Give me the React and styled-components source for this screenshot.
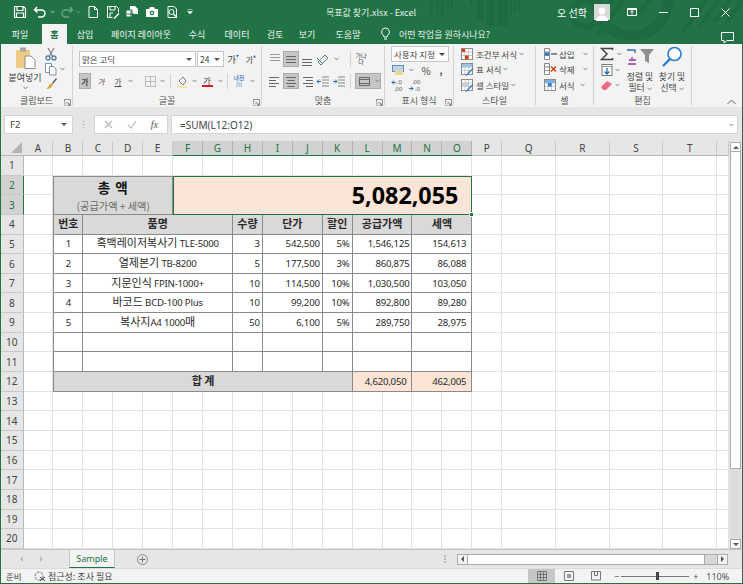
import React from "react";
import styled, { createGlobalStyle } from "styled-components";

const UI = `"Noto Sans", "Noto Sans CJK KR", sans-serif`;
const KR = `"Noto Sans CJK KR", "Noto Sans", sans-serif`;
const GREEN = "#217346";

const COLS = ["A","B","C","D","E","F","G","H","I","J","K","L","M","N","O","P","Q","R","S","T",""];
const COL_SIZES = "repeat(16, 29.93px) repeat(4, 53.7px) 11.5px";

// cells of the table: [row, col, colSpan, text, kind]
const TABLE = [
  [4,2,1,"번호","head"],[4,3,5,"품명","head"],[4,8,1,"수량","head"],[4,9,2,"단가","head"],
  [4,11,1,"할인","head"],[4,12,2,"공급가액","head"],[4,14,2,"세액","head"],
  [12,2,10,"합 계","total"],[12,12,2,"4,620,050","sum"],[12,14,2,"462,005","sum"],
];
const ROWS = [
  ["1","흑백레이저복사기 TLE-5000","3","542,500","5%","1,546,125","154,613"],
  ["2","열제본기 TB-8200","5","177,500","3%","860,875","86,088"],
  ["3","지문인식 FPIN-1000+","10","114,500","10%","1,030,500","103,050"],
  ["4","바코드 BCD-100 Plus","10","99,200","10%","892,800","89,280"],
  ["5","복사지A4 1000매","50","6,100","5%","289,750","28,975"],
  ["","","","","","",""],
  ["","","","","","",""],
];
ROWS.forEach((r, i) => {
  const y = 5 + i;
  TABLE.push(
    [y,2,1,r[0],"center"],[y,3,5,r[1],"center"],[y,8,1,r[2],"num"],[y,9,2,r[3],"num"],
    [y,11,1,r[4],"num"],[y,12,2,r[5],"num"],[y,14,2,r[6],"tax"]
  );
});

const GlobalStyle = createGlobalStyle`
  html, body { margin: 0; padding: 0; background: #e6e6e6; overflow: hidden; }
  * { box-sizing: border-box; }
`;

const Win = styled.div`
  width: 743px;
  height: 584px;
  display: flex;
  flex-direction: column;
  border-left: 1px solid ${GREEN};
  border-right: 1px solid ${GREEN};
  border-bottom: 1px solid ${GREEN};
  font-family: ${UI};
  color: #444;
  overflow: hidden;
`;

const Header = styled.div`
  position: relative;
  background: ${GREEN};
  height: 44px;
  flex: none;
  color: #fff;
  overflow: hidden;
`;
const Pattern = styled.svg`
  position: absolute;
  left: 419px;
  top: 0;
`;
const TitleBar = styled.div`
  position: relative;
  height: 24px;
  display: flex;
  align-items: center;
`;
const Qat = styled.div`
  display: flex;
  align-items: center;
  width: 197px;
  padding-left: 9px;
  flex: none;
`;
const QatBtn = styled.span`
  display: flex;
  justify-content: center;
  width: ${p => p.$w || 20}px;
  margin-left: ${p => p.$ml || 0}px;
  flex: none;
  opacity: ${p => (p.$dim ? 0.35 : 1)};
`;
const Title = styled.div`
  width: 346px;
  flex: none;
  text-align: center;
  font: 9px ${KR};
  color: #e6f0ea;
`;
const UserName = styled.div`
  font: 10px ${KR};
  width: 44px;
  flex: none;
  margin-left: 6px;
  text-align: center;
`;
const Avatar = styled.div`
  width: 16px;
  height: 16px;
  background: #d9d9d9;
  flex: none;
  margin-right: 7px;
`;
const WinBtn = styled.span`
  display: flex;
  justify-content: center;
  width: 31px;
  flex: none;
`;
const TabRow = styled.div`
  position: relative;
  height: 20px;
  display: flex;
  align-items: stretch;
`;
const Tab = styled.div`
  width: ${p => p.$w}px;
  margin-left: ${p => p.$ml || 0}px;
  flex: none;
  display: flex;
  align-items: center;
  justify-content: center;
  font: ${p => (p.$active ? 700 : 400)} 9px ${KR};
  color: ${p => (p.$active ? GREEN : "#f0f5f2")};
  background: ${p => (p.$active ? "#f3f3f3" : "transparent")};
`;
const TellMe = styled.div`
  display: flex;
  align-items: center;
  gap: 8px;
  margin-left: 7px;
  font: 9px ${KR};
  color: #e6f0ea;
`;
const CommentBtn = styled.span`
  position: absolute;
  left: 720px;
  top: 3px;
`;

const Ribbon = styled.div`
  position: relative;
  height: 63px;
  flex: none;
  background: #f3f3f3;
  display: flex;
  padding-top: 2px;
`;
const Group = styled.div`
  position: relative;
  width: ${p => p.$w}px;
  flex: none;
  height: 59px;
  border-right: 1px solid #d2d2d2;
`;
const GroupBody = styled.div`
  height: 49px;
  display: flex;
  padding-left: ${p => p.$pad || 0}px;
`;
const GroupLabel = styled.div`
  height: 12px;
  font: 9px/12px ${KR};
  text-align: center;
  color: #555;
`;
const Launcher = styled.svg`
  position: absolute;
  right: 1px;
  bottom: -1px;
`;
const Stack = styled.div`
  display: flex;
  flex-direction: column;
  flex: none;
  gap: ${p => p.$gap || 0}px;
  padding-top: ${p => p.$top || 0}px;
  align-items: ${p => (p.$center ? "center" : "flex-start")};
  width: ${p => (p.$w ? p.$w + "px" : "auto")};
`;
const Line = styled.div`
  display: flex;
  align-items: center;
  height: ${p => p.$h || 15}px;
  gap: ${p => p.$gap || 0}px;
  padding-left: ${p => p.$pad || 0}px;
`;
const PasteText = styled.div`
  font: 9px/11px ${KR};
  color: #444;
  margin-top: 3px;
  white-space: nowrap;
`;
const Combo = styled.div`
  width: ${p => p.$w}px;
  height: 16px;
  margin-left: ${p => p.$ml || 0}px;
  flex: none;
  background: #fff;
  border: 1px solid #c6c6c6;
  display: flex;
  align-items: center;
  justify-content: space-between;
  padding: 0 3px 0 2px;
  font: 8.5px ${KR};
  color: #444;
`;
const Tool = styled.span`
  width: ${p => p.$w || 16}px;
  height: 16px;
  margin-left: ${p => p.$ml || 0}px;
  flex: none;
  display: flex;
  align-items: center;
  justify-content: center;
  font: ${p => (p.$bold ? 700 : 400)} ${p => p.$size || 8.5}px ${KR};
  font-style: ${p => (p.$italic ? "italic" : "normal")};
  text-decoration: ${p => (p.$under ? "underline" : "none")};
  color: #444;
  background: ${p => (p.$on ? "#c6c6c6" : "transparent")};
  border: ${p => (p.$on ? "1px solid #ababab" : "0")};
`;
const MergeTool = styled(Tool)`
  justify-content: flex-start;
  gap: 5px;
  padding-left: 3px;
`;
const SmallStack = styled(Tool)`
  line-height: 6px;
  text-align: center;
  font-size: 6px;
  color: ${p => p.$color || "#444"};
`;
const ColorTool = styled(Tool)`
  flex-direction: column;
  line-height: 10px;
`;
const ColorBar = styled.span`
  width: 11px;
  height: 2px;
  background: #e81123;
`;
const Sep = styled.span`
  width: 1px;
  height: 15px;
  flex: none;
  background: #d2d2d2;
  margin: 0 ${p => p.$mr ?? 3}px 0 ${p => p.$ml ?? 3}px;
`;
const MenuItem = styled.div`
  display: flex;
  align-items: center;
  height: 15.5px;
  gap: 2px;
  font: 8.5px ${KR};
  color: #444;
  white-space: nowrap;
`;
const ChevGap = styled.span`
  display: flex;
  margin-left: ${p => p.$ml}px;
`;
const BigTool = styled.div`
  width: 32px;
  flex: none;
  display: flex;
  flex-direction: column;
  align-items: center;
  font: 8.8px/11px ${KR};
  color: #444;
  text-align: center;
  white-space: nowrap;
`;
const BigCaption = styled.span`
  margin-top: ${p => p.$top || 0}px;
`;
const Collapse = styled.svg`
  position: absolute;
  left: 726px;
  top: 55px;
`;

const FormulaBar = styled.div`
  height: 34px;
  flex: none;
  background: #e6e6e6;
  display: flex;
  padding: 8px 4px 0 3px;
`;
const NameBox = styled.div`
  width: 69px;
  height: 19px;
  background: #fff;
  border: 1px solid #d4d4d4;
  display: flex;
  align-items: center;
  justify-content: space-between;
  padding: 0 5px;
  font-size: 9.5px;
  color: #444;
`;
const Grip = styled.div`
  width: 21px;
  height: 19px;
  display: flex;
  align-items: center;
  justify-content: center;
  color: #999;
  font-size: 9px;
`;
const FxButtons = styled.div`
  width: 74px;
  height: 19px;
  background: #fff;
  border: 1px solid #d4d4d4;
  display: flex;
  align-items: center;
  justify-content: space-around;
  padding: 0 2px;
`;
const FxLabel = styled.span`
  font: italic 10px "Liberation Serif", serif;
  color: #555;
`;
const FormulaInput = styled.div`
  width: 567px;
  height: 19px;
  margin-left: 3px;
  background: #fff;
  border: 1px solid #d4d4d4;
  display: flex;
  align-items: center;
  justify-content: space-between;
  padding: 0 3px 0 8px;
  font-size: 10px;
  color: #444;
`;

const SheetArea = styled.div`
  flex: 1;
  display: flex;
  min-height: 0;
  background: #e6e6e6;
`;
const Grid = styled.div`
  display: grid;
  grid-template-columns: 22.5px ${COL_SIZES};
  grid-template-rows: 15px repeat(20, 19.65px);
  background: #fff;
  width: 728px;
  flex: none;
`;
const Corner = styled.div`
  background: #e6e6e6;
  border-bottom: 1px solid #b9b9b9;
  position: relative;
`;
const CornerMark = styled.svg`
  position: absolute;
  right: 2px;
  bottom: 2px;
`;
const ColHead = styled.div`
  display: flex;
  align-items: center;
  justify-content: center;
  font-size: 10px;
  color: ${p => (p.$on ? GREEN : "#444")};
  background: ${p => (p.$on ? "#d2d2d2" : "#e6e6e6")};
  border-right: 1px solid ${p => (p.$on ? "#b2b2b2" : "#c8c8c8")};
  border-bottom: ${p => (p.$on ? `1px solid ${GREEN}` : "1px solid #b9b9b9")};
`;
const RowHead = styled.div`
  display: flex;
  align-items: center;
  justify-content: center;
  font-size: 10px;
  color: ${p => (p.$on ? GREEN : "#444")};
  background: ${p => (p.$on ? "#d2d2d2" : "#e6e6e6")};
  border-bottom: 1px solid #c8c8c8;
  border-right: ${p => (p.$on ? `1px solid ${GREEN}` : "1px solid #b9b9b9")};
`;
const Blank = styled.div`
  border-right: 1px solid #e1e1e1;
  border-bottom: 1px solid #e1e1e1;
`;
const CELL_BG = { head: "#d9d9d9", total: "#d9d9d9", sum: "#fce4d6", center: "#fff", num: "#fff", tax: "#fff" };
const Cell = styled.div`
  grid-column: ${p => p.$col + 1} / span ${p => p.$span};
  grid-row: ${p => p.$row + 1};
  display: flex;
  align-items: center;
  justify-content: ${p => (["num", "tax", "sum"].includes(p.$kind) ? "flex-end" : "center")};
  padding: 0 ${p => (p.$kind === "tax" || p.$kind === "sum" ? 5 : 2)}px 0 2px;
  background: ${p => CELL_BG[p.$kind]};
  border-right: 1px solid #8a8a8a;
  border-bottom: 1px solid #8a8a8a;
  border-left: ${p => (p.$col === 2 ? "1px solid #8a8a8a" : 0)};
  box-shadow: ${p => (p.$row === 12 ? "0 -1px 0 #9a9a9a" : "none")};
  font: ${p => (p.$kind === "head" || p.$kind === "total" ? 700 : 400)} 9.6px ${UI};
  letter-spacing: -0.2px;
  color: #2a2a2a;
  white-space: nowrap;
`;
const Han = styled.span`
  font-family: ${KR};
  font-size: 11px;
  letter-spacing: 0;
  line-height: 1;
`;
const TitleCell = styled.div`
  grid-column: 3 / span 4;
  grid-row: 3 / span 2;
  background: #d9d9d9;
  border: 1px solid #8a8a8a;
  display: flex;
  flex-direction: column;
  align-items: center;
`;
const TitleMain = styled.div`
  font: 700 13.5px/20px ${KR};
  color: #111;
  letter-spacing: 1px;
`;
const TitleSub = styled.div`
  font: 10.2px/18px ${KR};
  color: #6a6a6a;
`;
const TotalCell = styled.div`
  grid-column: 7 / span 10;
  grid-row: 3 / span 2;
  background: #fce4d6;
  display: flex;
  align-items: center;
  justify-content: flex-end;
  padding-right: 13px;
  font: 700 23.3px ${UI};
  color: #000;
  border: 1px solid ${GREEN};
  position: relative;
  z-index: 1;
`;
const Handle = styled.span`
  position: absolute;
  right: -3px;
  bottom: -3px;
  width: 5px;
  height: 5px;
  background: ${GREEN};
  border: 1px solid #fff;
`;

const VScroll = styled.div`
  width: 11px;
  margin: 1px 0 0 1px;
  display: flex;
  flex-direction: column;
`;
const ScrollBtn = styled.div`
  height: ${p => p.$h || 10}px;
  flex: none;
  background: #fff;
  border: 1px solid #ababab;
  display: flex;
  align-items: center;
  justify-content: center;
`;
const VThumb = styled.div`
  flex: 1;
  background: #fff;
  border-left: 1px solid #ababab;
  border-right: 1px solid #ababab;
  border-bottom: 1px solid #ababab;
`;
const VTrack = styled.div`
  height: 70px;
  background: #dcdcdc;
`;

const SheetTabs = styled.div`
  height: 19px;
  flex: none;
  background: #e6e6e6;
  border-top: 1px solid #c6c6c6;
  display: flex;
  align-items: center;
`;
const TabNav = styled.div`
  width: 68px;
  flex: none;
  display: flex;
  gap: 17px;
  padding-left: 19px;
`;
const SheetTab = styled.div`
  width: 46px;
  height: 18px;
  flex: none;
  background: #f3f3f3;
  border-left: 1px solid #c6c6c6;
  border-right: 1px solid #c6c6c6;
  border-bottom: 1px solid ${GREEN};
  margin-top: -1px;
  color: ${GREEN};
  font-size: 9px;
  display: flex;
  align-items: center;
  justify-content: center;
`;
const AddSheet = styled.svg`
  margin-left: 22px;
  flex: none;
`;
const Dots = styled.div`
  margin-left: 296px;
  width: 2px;
  height: 8px;
  border-left: 2px dotted #bbb;
  flex: none;
`;
const HScroll = styled.div`
  margin-left: 11px;
  width: 271px;
  height: 11px;
  display: flex;
  flex: none;
  background: #d8d8d8;
  border: 1px solid #ababab;
  align-items: stretch;
`;
const HBtn = styled.div`
  width: 10px;
  flex: none;
  background: #f3f3f3;
  display: flex;
  align-items: center;
  justify-content: center;
  border-right: ${p => (p.$end ? 0 : "1px solid #ababab")};
  border-left: ${p => (p.$end ? "1px solid #ababab" : 0)};
`;
const HThumb = styled.div`
  width: 237px;
  flex: none;
  background: #fff;
  border-right: 1px solid #ababab;
`;
const HTrack = styled.div`
  flex: 1;
`;

const Status = styled.div`
  height: 15px;
  flex: none;
  background: #f3f3f3;
  border-top: 1px solid #dcdcdc;
  display: flex;
  align-items: center;
  font: 8.5px ${KR};
  color: #444;
`;
const StatusLeft = styled.div`
  width: 33px;
  padding-left: 5px;
  flex: none;
`;
const A11y = styled.div`
  display: flex;
  align-items: center;
  gap: 2px;
  width: 494px;
  flex: none;
  font-size: 9px;
`;
const ViewBtn = styled.div`
  width: 27px;
  height: 14px;
  flex: none;
  display: flex;
  align-items: center;
  justify-content: center;
  background: ${p => (p.$on ? "#c6c6c6" : "transparent")};
`;
const ZoomSlider = styled.div`
  margin: 0 4px 0 2px;
  width: 68px;
  flex: none;
  height: 1px;
  background: #777;
  position: relative;
`;
const ZoomKnob = styled.span`
  position: absolute;
  left: 35px;
  top: -4px;
  width: 3px;
  height: 8px;
  background: #444;
`;
const ZoomText = styled.span`
  font: 9px ${UI};
  color: #555;
  margin-left: ${p => p.$ml || 0}px;
  white-space: nowrap;
`;

const Chev = ({ c = "#666", s = 5 }) => (
  <svg width={s} height={s - 1} viewBox="0 0 6 4" style={{ flex: "none" }}>
    <path d="M.6.6 3 3 5.4.6" fill="none" stroke={c} strokeWidth="1" />
  </svg>
);
const Tri = ({ d = "down", c = "#555" }) => {
  const p = { down: "M0 0h6L3 3z", up: "M0 3h6L3 0z", left: "M3 0v6L0 3z", right: "M0 0v6l3-3z" }[d];
  const vertical = d === "down" || d === "up";
  return (
    <svg width={vertical ? 6 : 3} height={vertical ? 3 : 6} viewBox={vertical ? "0 0 6 3" : "0 0 3 6"}>
      <path d={p} fill={c} />
    </svg>
  );
};
const LaunchIcon = () => (
  <Launcher width="7" height="7" viewBox="0 0 7 7">
    <path d="M.5 3V.5h6v6H4M3 3l3 3M4 6h2V4" fill="none" stroke="#777" strokeWidth=".8" />
    <rect x=".5" y="4" width="2.5" height="2.500" fill="none" stroke="#999" strokeWidth=".6" />
  </Launcher>
);
const AlignLines = ({ y = [3, 6, 9, 12], w = [12, 12, 12, 12], x = "center", c = "#666" }) => (
  <svg width="14" height="14" viewBox="0 0 14 14">
    {y.map((v, i) => {
      const x0 = x === "left" ? 1 : x === "right" ? 13 - w[i] : 7 - w[i] / 2;
      return <rect key={v} x={x0} y={v} width={w[i]} height="1" fill={c} />;
    })}
  </svg>
);
const Ic = ({ w = 14, h = 14, vb, children }) => (
  <svg width={w} height={h} viewBox={vb || `0 0 ${w} ${h}`} style={{ flex: "none" }}>{children}</svg>
);
const GridIcon = ({ children }) => (
  <Ic>
    <rect x="1.500" y="1.500" width="11" height="11" fill="#fff" stroke="#8a8a8a" />
    <path d="M1.500 5h11M1.500 8.500h11M5 1.500v11M8.500 1.500v11" stroke="#b5b5b5" strokeWidth=".7" />
    {children}
  </Ic>
);
const PenOver = () => <path d="M6 12.500 12.500 6l1 1-6.500 6.500H5z" fill="#2b7cd3" />;

// 한글만 조금 크게: the sheet's hangul runs wider than its digits
const Mixed = ({ text }) => (
  <span>
    {text.split(/([가-힣]+)/).map((part, i) =>
      /[가-힣]/.test(part) ? <Han key={i}>{part}</Han> : part
    )}
  </span>
);

const App = () => {
  const taken = {};
  TABLE.forEach(([r, c, span]) => {
    for (let i = 0; i < span; i++) taken[`${r}-${c + i}`] = true;
  });
  for (let r = 2; r <= 3; r++) for (let c = 2; c <= 15; c++) taken[`${r}-${c}`] = true;

  const rows = Array.from({ length: 20 }, (_, i) => i + 1);

  return (
    <>
      <GlobalStyle />
      <Win>
        <Header>
          <Pattern width="323" height="44" viewBox="0 0 323 44">
            <g fill="#1e6b41">
              <path d="M10 0h3v14h-3zM16 0h2v10h-2zM21 0h3v16h-3zM27 0h2v12h-2zM31 0h2v8h-2zM50 0h2v4h-2zM57 0h7v20h-7zM67 0h8v26h-8zM78 0h10v26h-10zM90 0h2v16h-2zM94 0h2v13h-2zM98 0h2v10h-2z" />
              <path d="M189 0h6l-18 24h-6zM200 0h6l-26 36h-6zM226 0h6l-10 14h-6zM284 0h5l-24 32h-5zM296 0h5l-20 28h-5zM308 0h5l-16 22h-5zM320 0h3v4l-14 18h-5z" />
            </g>
            <circle cx="165" cy="14" r="13" fill="none" stroke="#1e6b41" strokeWidth="6" />
            <path d="M176 0a36 36 0 0 0 72 0" fill="none" stroke="#1e6b41" strokeWidth="10" />
          </Pattern>
          <TitleBar>
            <Qat>
              <QatBtn>
                <Ic vb="0 0 14 14">
                  <path d="M1.500 1.500h9l2 2v9h-11zM4 1.500v4h6v-4M3.500 12.500v-4.500h7v4.500" fill="none" stroke="#fff" strokeWidth="1.200" />
                </Ic>
              </QatBtn>
              <QatBtn $w={16} $ml={2}>
                <Ic vb="0 0 14 14"><path d="M4 2 1.500 5 4.500 7.500M2 5h6.500a3.500 3.500 0 0 1 0 7H5" fill="none" stroke="#fff" strokeWidth="1.400" /></Ic>
              </QatBtn>
              <QatBtn $w={8}><Chev c="#cfe0d6" /></QatBtn>
              <QatBtn $w={18} $ml={2} $dim>
                <Ic vb="0 0 14 14"><path d="M10 2l2.500 3-3 2.500M12 5H5.500a3.500 3.500 0 0 0 0 7H9" fill="none" stroke="#fff" strokeWidth="1.400" /></Ic>
              </QatBtn>
              <QatBtn $w={5} $dim><Chev c="#fff" /></QatBtn>
              <QatBtn $w={24}>
                <Ic vb="0 0 14 14"><path d="M3 1.500h5.500l3 3v8h-8.500zM8.500 1.500v3h3" fill="none" stroke="#fff" /></Ic>
              </QatBtn>
              <QatBtn $w={16}>
                <Ic vb="0 0 14 14"><path d="M1.500 1.500h9l2 2v4M1.500 1.500v11h5M4 1.500v3.500h5v-3.500M4 12V8h3" fill="none" stroke="#fff" /><path d="M7.500 13l5-5 1 1-5 5z" fill="#fff" /></Ic>
              </QatBtn>
              <QatBtn $w={22}>
                <Ic vb="0 0 14 14"><path d="M5 1h5l3 3v5H5z" fill="#fff" /><path d="M1 5h6v7H1z" fill="#fff" stroke={GREEN} /><path d="M2 9h7M6 6v6" stroke={GREEN} /></Ic>
              </QatBtn>
              <QatBtn $w={18}>
                <Ic vb="0 0 14 14"><path d="M1 4h3l1-2h4l1 2h3v8H1z" fill="#fff" /><circle cx="7" cy="8" r="2.300" fill={GREEN} /><circle cx="7" cy="8" r="1.100" fill="#fff" /></Ic>
              </QatBtn>
              <QatBtn $w={22}>
                <Ic vb="0 0 14 14"><path d="M3 1.500h6l2.500 2.500v8.500H3z" fill="none" stroke="#fff" /><circle cx="6.500" cy="7" r="2.500" fill="none" stroke="#fff" /><path d="M8.500 9l3.500 3.500" stroke="#fff" strokeWidth="1.300" /></Ic>
              </QatBtn>
              <QatBtn $w={14}>
                <Ic w={6} h={6}><path d="M.5.5h5M.5 2.500h5l-2.500 2.500z" fill="#fff" stroke="#fff" strokeWidth=".5" /></Ic>
              </QatBtn>
            </Qat>
            <Title>목표값 찾기.xlsx - Excel</Title>
            <UserName>오 선학</UserName>
            <Avatar>
              <Ic w={16} h={16}><circle cx="8" cy="6" r="3.400" fill="#fff" /><path d="M2 16c0-4 3-5.500 6-5.500s6 1.500 6 5.500z" fill="#fff" /></Ic>
            </Avatar>
            <WinBtn>
              <Ic w={11} h={10}><path d="M.5 1.500h9v7h-9z" fill="none" stroke="#fff" /><path d="M.5 2.500h9" stroke="#fff" /><path d="M5 7.500V4M3.500 5 5 3.500 6.500 5" fill="none" stroke="#fff" /></Ic>
            </WinBtn>
            <WinBtn><Ic w={9} h={9}><path d="M0 4.500h9" stroke="#fff" /></Ic></WinBtn>
            <WinBtn><Ic w={9} h={9}><rect x=".5" y=".5" width="8" height="8" fill="none" stroke="#fff" /></Ic></WinBtn>
            <WinBtn><Ic w={9} h={9}><path d="M.5.5l8 8M8.500.5l-8 8" stroke="#fff" /></Ic></WinBtn>
          </TitleBar>
          <TabRow>
            <Tab $w={38}>파일</Tab>
            <Tab $w={25} $ml={3} $active>홈</Tab>
            <Tab $w={36}>삽입</Tab>
            <Tab $w={76}>페이지 레이아웃</Tab>
            <Tab $w={36}>수식</Tab>
            <Tab $w={44}>데이터</Tab>
            <Tab $w={32}>검토</Tab>
            <Tab $w={32}>보기</Tab>
            <Tab $w={50}>도움말</Tab>
            <TellMe>
              <Ic w={11} h={14}><path d="M5.500 1a4 4 0 0 0-2.300 7.200c.5.4.8 1 .8 1.800h3c0-.8.3-1.400.8-1.800A4 4 0 0 0 5.500 1zM4 12h3" fill="none" stroke="#fff" /></Ic>
              어떤 작업을 원하시나요?
            </TellMe>
            <CommentBtn>
              <Ic w={13} h={12}><path d="M.5.500h12v8H6l-3 2.500V8.500H.5z" fill="none" stroke="#fff" /></Ic>
            </CommentBtn>
          </TabRow>
        </Header>

        <Ribbon>
          <Group $w={72}>
            <GroupBody $pad={5}>
              <Stack $center $w={38}>
                <Ic w={22} h={23} vb="0 0 22 23">
                  <rect x="2" y="4" width="14" height="18" rx="1" fill="#eecb84" />
                  <rect x="6" y="1.500" width="6" height="4" fill="#a7a7a7" />
                  <path d="M11 10h6l4 4v8.500H11z" fill="#fff" stroke="#8d8d8d" />
                </Ic>
                <PasteText>붙여넣기</PasteText>
                <Line $h={9}><Chev /></Line>
              </Stack>
              <Stack>
                <Line>
                  <Ic><circle cx="4" cy="11" r="2" fill="none" stroke="#4f7cab" strokeWidth="1.300" /><circle cx="10" cy="11" r="2" fill="none" stroke="#4f7cab" strokeWidth="1.300" /><path d="M5.200 9.500 10 1M8.800 9.500 4 1" stroke="#777" strokeWidth="1.100" /></Ic>
                </Line>
                <Line $gap={2}>
                  <Ic><path d="M1.500 1.500h6v9h-6z" fill="#fff" stroke="#7a94b3" /><path d="M5.500 4.500h4l2.500 2.500v6h-6.500z" fill="#fff" stroke="#7a94b3" /></Ic>
                  <Chev />
                </Line>
                <Line>
                  <Ic><path d="M8 6l4-5 1 1-4 5z" fill="#555" /><path d="M2 12c2-1 3-4 5-6l2 2c-1 2-3 4-7 4z" fill="#d9a441" /></Ic>
                </Line>
              </Stack>
            </GroupBody>
            <GroupLabel>클립보드</GroupLabel>
            <LaunchIcon />
          </Group>

          <Group $w={189}>
            <GroupBody $pad={6}>
              <Stack $top={5} $gap={6}>
                <Line $h={16}>
                  <Combo $w={117}>맑은 고딕<Tri /></Combo>
                  <Combo $w={27} $ml={1}>24<Tri /></Combo>
                  <Tool $w={18} $size={9.5}>가<Ic w={3} h={8}><path d="M0 0h3L1.500 2.500z" fill="#2b6cb0" /></Ic></Tool>
                  <Tool $w={18} $size={8}>가<Ic w={3} h={8}><path d="M0 2.500h3L1.500 0z" fill="#2b6cb0" /></Ic></Tool>
                </Line>
                <Line $h={16}>
                  <Tool $w={12} $on $bold $size={7.5}>가</Tool>
                  <Tool $w={20} $italic $size={7.5}>가</Tool>
                  <Tool $w={14} $under $size={7.5}>가</Tool>
                  <Tool $w={10}><Chev /></Tool>
                  <Tool $w={14} $ml={8}><Ic w={11} h={11}><path d="M.5.500h10v10H.5zM5.500.5v10M.5 5.500h10" fill="none" stroke="#bbb" /></Ic></Tool>
                  <Tool $w={10}><Chev /></Tool>
                  <Sep />
                  <Tool $w={16}><Ic w={13} h={13}><path d="M3 6l4-4 3 4-3 4z" fill="#fff" stroke="#777" /><path d="M1 12h10" stroke="#f5e7a7" strokeWidth="2" /></Ic></Tool>
                  <Tool $w={8}><Chev /></Tool>
                  <ColorTool $w={18}>가<ColorBar /></ColorTool>
                  <Tool $w={8}><Chev /></Tool>
                  <Sep />
                  <SmallStack $w={16} $color="#2b6cb0">내천<br />川</SmallStack>
                  <Tool $w={10}><Chev /></Tool>
                </Line>
              </Stack>
            </GroupBody>
            <GroupLabel>글꼴</GroupLabel>
            <LaunchIcon />
          </Group>

          <Group $w={123}>
            <GroupBody $pad={5}>
              <Stack $top={5} $gap={6}>
                <Line $h={16}>
                  <Tool><AlignLines y={[2, 5, 8]} w={[10, 10, 10]} c="#999" /></Tool>
                  <Tool $on><AlignLines y={[4, 7, 10]} w={[10, 10, 10]} /></Tool>
                  <Tool><AlignLines y={[7, 10, 13]} w={[10, 10, 10]} /></Tool>
                  <Tool><Ic><path d="M2 10 9 3l3 3-7 7z" fill="none" stroke="#777" /><path d="M1 6l6 6" stroke="#2b6cb0" /></Ic></Tool>
                  <Tool $w={10}><Chev /></Tool>
                  <Sep $ml={9} $mr={0} />
                  <SmallStack $w={20}>가나<br />다</SmallStack>
                </Line>
                <Line $h={16}>
                  <Tool><AlignLines x="left" w={[10, 7, 10, 7]} /></Tool>
                  <Tool $on><AlignLines w={[10, 7, 10, 7]} /></Tool>
                  <Tool><AlignLines x="right" w={[10, 7, 10, 7]} /></Tool>
                  <Tool><Ic><path d="M6 3h7M6 6h7M6 9h7M6 12h7" stroke="#888" /><path d="M1 7.500h4M3 5.500l-2 2 2 2" fill="none" stroke="#2b6cb0" /></Ic></Tool>
                  <Tool><Ic><path d="M6 3h7M6 6h7M6 9h7M6 12h7" stroke="#888" /><path d="M1 7.500h4M3 5.500l2 2-2 2" fill="none" stroke="#2b6cb0" /></Ic></Tool>
                  <Sep $mr={4} />
                  <MergeTool $w={26} $on>
                    <Ic w={11} h={11}><path d="M.5 1.500h10v8H.5zM.5 3.500h10M.5 7.500h10" fill="none" stroke="#666" /></Ic>
                    <Chev />
                  </MergeTool>
                </Line>
              </Stack>
            </GroupBody>
            <GroupLabel>맞춤</GroupLabel>
            <LaunchIcon />
          </Group>

          <Group $w={69}>
            <GroupBody $pad={5}>
              <Stack>
                <Combo $w={58} $ml={1}>사용자 지정<Tri c="#444" /></Combo>
                <Line $h={16}>
                  <Tool><Ic w={13} h={11}><rect x=".5" y=".5" width="11" height="6" fill="#bcd6ee" stroke="#5b8db8" /><rect x="3" y="6" width="8" height="4" fill="#f1d58a" /></Ic></Tool>
                  <Tool $w={10}><Chev /></Tool>
                  <Tool $w={20} $size={10}>%</Tool>
                  <Tool $w={10} $bold $size={9}>,</Tool>
                </Line>
                <Line $h={15} $gap={3} $pad={1}>
                  <Tool $w={14}>
                    <Ic w={14} h={13}>
                      <path d="M1 3.500h4M3 1.500l-2 2 2 2" fill="none" stroke="#2b6cb0" />
                      <text x="6" y="5" fontSize="6" fill="#555" fontFamily="Noto Sans">.0</text>
                      <text x="3" y="12" fontSize="6" fill="#555" fontFamily="Noto Sans">.00</text>
                    </Ic>
                  </Tool>
                  <Tool $w={14}>
                    <Ic w={14} h={13}>
                      <path d="M1 9.500h4M3 7.500l2 2-2 2" fill="none" stroke="#2b6cb0" />
                      <text x="4" y="5" fontSize="6" fill="#555" fontFamily="Noto Sans">.00</text>
                      <text x="7" y="12" fontSize="6" fill="#555" fontFamily="Noto Sans">.0</text>
                    </Ic>
                  </Tool>
                </Line>
              </Stack>
            </GroupBody>
            <GroupLabel>표시 형식</GroupLabel>
            <LaunchIcon />
          </Group>

          <Group $w={82}>
            <GroupBody $pad={6}>
              <Stack>
                <MenuItem>
                  <GridIcon><rect x="2" y="2" width="3" height="3" fill="#d83b01" /><rect x="5" y="8.500" width="3.500" height="3.500" fill="#d83b01" /></GridIcon>
                  조건부 서식<Chev />
                </MenuItem>
                <MenuItem><GridIcon><rect x="2" y="2" width="10" height="3" fill="#9dc3e6" /><PenOver /></GridIcon>표 서식<Chev /></MenuItem>
                <MenuItem><GridIcon><rect x="2" y="5" width="6.500" height="3.500" fill="#d0d0d0" /><PenOver /></GridIcon>셀 스타일<Chev /></MenuItem>
              </Stack>
            </GroupBody>
            <GroupLabel>스타일</GroupLabel>
          </Group>

          <Group $w={58}>
            <GroupBody $pad={7}>
              <Stack>
                <MenuItem>
                  <Ic><path d="M1.500 1.500h5v11h-5zM1.500 5h5M1.500 8.500h5" fill="#fff" stroke="#8a8a8a" /><rect x="2" y="5.500" width="4" height="3" fill="#2b7cd3" /><path d="M8 7h6" stroke="#888" strokeWidth="2" /></Ic>
                  삽입<ChevGap $ml={6}><Chev /></ChevGap>
                </MenuItem>
                <MenuItem>
                  <Ic><path d="M1.500 1.500h5v11h-5zM1.500 5h5M1.500 8.500h5" fill="#fff" stroke="#8a8a8a" /><path d="M8 4.500l5 5M13 4.500l-5 5" stroke="#d83b01" strokeWidth="1.400" /></Ic>
                  삭제<ChevGap $ml={6}><Chev /></ChevGap>
                </MenuItem>
                <MenuItem>
                  <GridIcon><rect x="2" y="2" width="10" height="3" fill="#7fb0dc" /><rect x="5" y="5" width="3.500" height="3.500" fill="#2b7cd3" /></GridIcon>
                  서식<ChevGap $ml={3}><Chev /></ChevGap>
                </MenuItem>
              </Stack>
            </GroupBody>
            <GroupLabel>셀</GroupLabel>
          </Group>

          <Group $w={98}>
            <GroupBody $pad={6}>
              <Stack $w={24}>
                <Line $h={16} $gap={3}>
                  <Ic><path d="M12.500 3V1.500h-11L7 7l-5.500 5.500h11V11" fill="none" stroke="#444" strokeWidth="1.500" /></Ic>
                  <Chev />
                </Line>
                <Line $h={15} $gap={1}>
                  <Ic><rect x="2" y="1.500" width="10" height="11" fill="#fff" stroke="#777" /><path d="M2 3.500h10" stroke="#999" /><path d="M7 5v6M4.500 8.500 7 11l2.500-2.500" fill="none" stroke="#2b6cb0" strokeWidth="1.300" /></Ic>
                  <Chev />
                </Line>
                <Line $h={15} $gap={1}>
                  <Ic><path d="M1 9l6-6 5 3-6 6H3z" fill="#f06a8a" /></Ic>
                  <Chev />
                </Line>
              </Stack>
              <BigTool>
                <Ic w={28} h={20} vb="0 0 28 20">
                  <path d="M1 4h8v3" fill="none" stroke="#2b6cb0" strokeWidth="1.300" />
                  <path d="M3 14h7M6 11v3M2 18h8" stroke="#9b2fa8" strokeWidth="1.300" />
                  <path d="M14 3h14l-5 6v8l-4-2V9z" fill="#8f8f8f" />
                </Ic>
                <BigCaption $top={5}>정렬 및</BigCaption>
                <BigCaption>필터 <Chev /></BigCaption>
              </BigTool>
              <BigTool>
                <Ic w={22} h={22} vb="0 0 22 22">
                  <circle cx="13.500" cy="8" r="6.500" fill="#fff" stroke="#2b7cd3" strokeWidth="1.600" />
                  <path d="M9 13 2 20" stroke="#2b7cd3" strokeWidth="2.400" />
                </Ic>
                <BigCaption $top={3}>찾기 및</BigCaption>
                <BigCaption>선택 <Chev /></BigCaption>
              </BigTool>
            </GroupBody>
            <GroupLabel>편집</GroupLabel>
          </Group>
          <Collapse width="9" height="6" viewBox="0 0 9 6">
            <path d="M.5 5 4.500 1l4 4" fill="none" stroke="#666" />
          </Collapse>
        </Ribbon>

        <FormulaBar>
          <NameBox>F2<Tri /></NameBox>
          <Grip>⋮</Grip>
          <FxButtons>
            <Ic w={9} h={9}><path d="M1 1l7 7M8 1 1 8" stroke="#bbb" strokeWidth="1.200" /></Ic>
            <Ic w={10} h={9}><path d="M1 5l3 3 5-7" fill="none" stroke="#bbb" strokeWidth="1.200" /></Ic>
            <FxLabel>fx</FxLabel>
          </FxButtons>
          <FormulaInput>=SUM(L12:O12)<Chev /></FormulaInput>
        </FormulaBar>

        <SheetArea>
          <Grid>
            <Corner>
              <CornerMark width="11" height="11" viewBox="0 0 11 11"><path d="M11 0v11H0z" fill="#b4b4b4" /></CornerMark>
            </Corner>
            {COLS.map((c, i) => (
              <ColHead key={i} $on={i >= 5 && i <= 14}>{c}</ColHead>
            ))}
            {rows.map(r => (
              <React.Fragment key={r}>
                <RowHead $on={r === 2 || r === 3} style={{ gridColumn: 1, gridRow: r + 1 }}>{r}</RowHead>
                {COLS.map((_, i) =>
                  taken[`${r}-${i + 1}`] ? null : (
                    <Blank key={i} style={{ gridColumn: i + 2, gridRow: r + 1 }} />
                  )
                )}
              </React.Fragment>
            ))}
            <TitleCell>
              <TitleMain>총 액</TitleMain>
              <TitleSub>(공급가액 + 세액)</TitleSub>
            </TitleCell>
            <TotalCell>5,082,055<Handle /></TotalCell>
            {TABLE.map(([r, c, span, text, kind]) => (
              <Cell key={`${r}-${c}`} $row={r} $col={c} $span={span} $kind={kind}><Mixed text={text} /></Cell>
            ))}
          </Grid>
          <VScroll>
            <ScrollBtn><Tri d="up" /></ScrollBtn>
            <VThumb />
            <VTrack />
            <ScrollBtn><Tri d="down" /></ScrollBtn>
          </VScroll>
        </SheetArea>

        <SheetTabs>
          <TabNav><Tri d="left" c="#bbb" /><Tri d="right" c="#bbb" /></TabNav>
          <SheetTab>Sample</SheetTab>
          <AddSheet width="11" height="11" viewBox="0 0 11 11">
            <circle cx="5.500" cy="5.500" r="5" fill="none" stroke="#888" />
            <path d="M5.500 2.500v6M2.500 5.500h6" stroke="#777" />
          </AddSheet>
          <Dots />
          <HScroll>
            <HBtn><Tri d="left" /></HBtn>
            <HThumb />
            <HTrack />
            <HBtn $end><Tri d="right" /></HBtn>
          </HScroll>
        </SheetTabs>

        <Status>
          <StatusLeft>준비</StatusLeft>
          <A11y>
            <Ic w={12} h={11}><circle cx="5" cy="5" r="4" fill="none" stroke="#777" strokeDasharray="3 1" /><path d="M6 6l5 4M11 6l-5 4" stroke="#444" /></Ic>
            접근성: 조사 필요
          </A11y>
          <ViewBtn $on><Ic w={10} h={10}><path d="M.5.500h9v9h-9zM3.500.5v9M6.500.5v9M.5 3.500h9M.5 6.500h9" fill="none" stroke="#666" strokeWidth=".8" /></Ic></ViewBtn>
          <ViewBtn><Ic w={10} h={10}><path d="M.5.500h9v9h-9z" fill="none" stroke="#777" /><rect x="3" y="3" width="4" height="4" fill="#999" /></Ic></ViewBtn>
          <ViewBtn><Ic w={10} h={10}><path d="M.5 9V.5h9V9zM3.500.5v4h3v-4" fill="none" stroke="#777" /></Ic></ViewBtn>
          <ZoomText $ml={5}>−</ZoomText>
          <ZoomSlider><ZoomKnob /></ZoomSlider>
          <ZoomText>+</ZoomText>
          <ZoomText $ml={8}>110%</ZoomText>
        </Status>
      </Win>
    </>
  );
};

export default App;
